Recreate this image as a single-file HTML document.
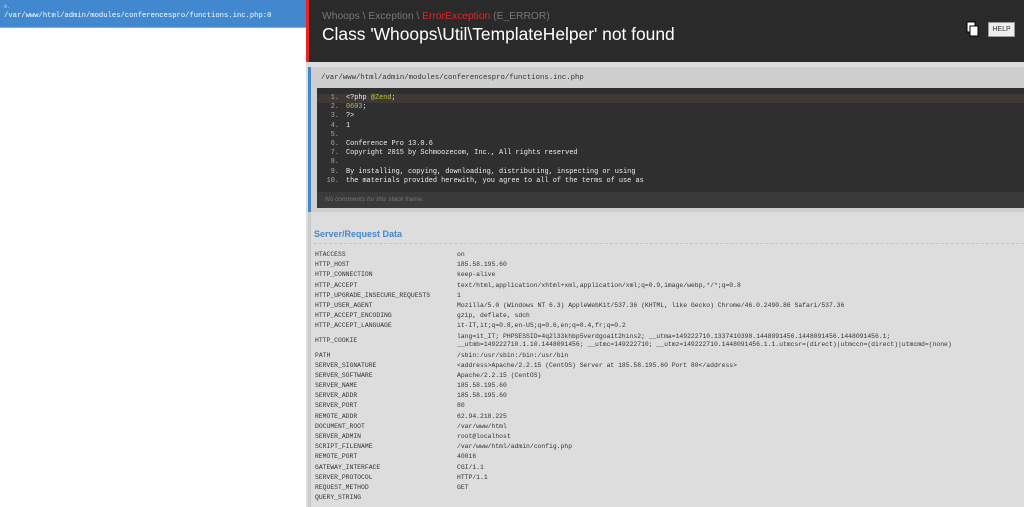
<!DOCTYPE html>
<html><head><meta charset="utf-8"><style>
*{margin:0;padding:0;box-sizing:border-box}
body{width:1024px;height:507px;overflow:hidden;background:#ddd;font-family:"Liberation Sans",sans-serif;position:relative}
.left{position:absolute;left:0;top:0;width:306px;height:507px;background:#fff}
.lh{position:absolute;left:0;top:0;width:306px;height:28px;background:#4288ce;border-bottom:1px solid #7fb0e0;color:#fff;font-family:"Liberation Mono",monospace}
.hdr{position:absolute;left:306px;top:0;width:718px;height:62px;background:#2a2a2a;border-left:3px solid #e22}
.mono{font-family:"Liberation Mono",monospace}
.frame{position:absolute;left:308px;top:67px;width:716px;height:145px;background:#cfcfcf;border-left:3px solid #4288ce}
.code{position:absolute;left:6px;top:21px;width:710px;height:120px;background:#2f2f2f;color:#eee;font-size:6.9px;line-height:9.2px;padding-top:6px}
.ln{display:inline-block;width:22px;text-align:right;color:#aaa;margin-right:7px}
.row{height:10.2px;font-size:6.4px;line-height:10.2px;color:#333;position:relative;white-space:nowrap}
.row .k{position:absolute;left:315px}
.row .v{position:absolute;left:457px}
</style></head><body>
<div class="left"><div class="lh"><div style="font-size:5px;color:#cde;position:absolute;left:4px;top:4px">0.</div><div style="font-size:7.2px;position:absolute;left:4px;top:12px">/var/www/html/admin/modules/conferencespro/functions.inc.php:0</div></div></div>
<div class="hdr">
<div style="position:absolute;left:13px;top:11px;font-size:10.3px;color:#777">Whoops \ Exception \ <span style="color:#e22">ErrorException</span> (E_ERROR)</div>
<div style="position:absolute;left:13px;top:24px;font-size:17.4px;color:#fff">Class 'Whoops\Util\TemplateHelper' not found</div>
<svg style="position:absolute;left:657px;top:21px" width="14" height="16"><rect x="1" y="1" width="8" height="10" fill="#fff" stroke="#000"/><rect x="4" y="5" width="8" height="10" fill="#fff" stroke="#000"/></svg>
<div style="position:absolute;left:679px;top:22px;width:27px;height:15px;background:#eee;border:1px solid #999;font-size:7px;line-height:13px;text-align:center;color:#333">HELP</div>
</div>
<div class="frame">
<div class="mono" style="position:absolute;left:10px;top:7px;font-size:7.3px;color:#333">/var/www/html/admin/modules/conferencespro/functions.inc.php</div>
<div class="code mono">
<div style="background:#423737"><span class="ln">1.</span>&lt;?php <span style="color:#a6c93a">@Zend</span>;</div>
<div><span class="ln">2.</span><span style="color:#a6c93a">0603</span>;</div>
<div><span class="ln">3.</span>?&gt;</div>
<div><span class="ln">4.</span>1</div>
<div><span class="ln">5.</span></div>
<div><span class="ln">6.</span>Conference Pro 13.0.6</div>
<div><span class="ln">7.</span>Copyright 2015 by Schmoozecom, Inc., All rights reserved</div>
<div><span class="ln">8.</span></div>
<div><span class="ln">9.</span>By installing, copying, downloading, distributing, inspecting or using</div>
<div><span class="ln">10.</span>the materials provided herewith, you agree to all of the terms of use as</div>
<div style="position:absolute;left:0;top:104px;width:710px;height:16px;background:#3a3a3a;color:#777;font-family:'Liberation Sans',sans-serif;font-style:italic;font-size:6.5px;line-height:16px;padding-left:8px">No comments for this stack frame.</div>
</div>
</div>
<div style="position:absolute;left:308px;top:212px;width:716px;height:295px;background:#ddd;border-left:3px solid #ccc"></div>
<div style="position:absolute;left:314px;top:229px;font-size:9px;font-weight:bold;color:#4288ce">Server/Request Data</div>
<div style="position:absolute;left:314px;top:243px;width:710px;border-top:1px dashed #c4c4c4"></div>
<div class="mono" style="position:absolute;left:0;top:250px;width:1024px">
<div class="row"><span class="k">HTACCESS</span><span class="v">on</span></div>
<div class="row"><span class="k">HTTP_HOST</span><span class="v">185.58.195.60</span></div>
<div class="row"><span class="k">HTTP_CONNECTION</span><span class="v">keep-alive</span></div>
<div class="row"><span class="k">HTTP_ACCEPT</span><span class="v">text/html,application/xhtml+xml,application/xml;q=0.9,image/webp,*/*;q=0.8</span></div>
<div class="row"><span class="k">HTTP_UPGRADE_INSECURE_REQUESTS</span><span class="v">1</span></div>
<div class="row"><span class="k">HTTP_USER_AGENT</span><span class="v">Mozilla/5.0 (Windows NT 6.3) AppleWebKit/537.36 (KHTML, like Gecko) Chrome/46.0.2490.86 Safari/537.36</span></div>
<div class="row"><span class="k">HTTP_ACCEPT_ENCODING</span><span class="v">gzip, deflate, sdch</span></div>
<div class="row"><span class="k">HTTP_ACCEPT_LANGUAGE</span><span class="v">it-IT,it;q=0.8,en-US;q=0.6,en;q=0.4,fr;q=0.2</span></div>
<div class="row" style="height:19px"><span class="k" style="top:4px">HTTP_COOKIE</span><span class="v" style="line-height:8.5px;top:1px">lang=it_IT; PHPSESSID=4q2l33khbp5verdgoa1t2hins2; __utma=149222710.1337410398.1448091456.1448091456.1448091456.1;<br>__utmb=149222710.1.10.1448091456; __utmc=149222710; __utmz=149222710.1448091456.1.1.utmcsr=(direct)|utmccn=(direct)|utmcmd=(none)</span></div>
<div class="row"><span class="k">PATH</span><span class="v">/sbin:/usr/sbin:/bin:/usr/bin</span></div>
<div class="row"><span class="k">SERVER_SIGNATURE</span><span class="v">&lt;address&gt;Apache/2.2.15 (CentOS) Server at 185.58.195.60 Port 80&lt;/address&gt;</span></div>
<div class="row"><span class="k">SERVER_SOFTWARE</span><span class="v">Apache/2.2.15 (CentOS)</span></div>
<div class="row"><span class="k">SERVER_NAME</span><span class="v">185.58.195.60</span></div>
<div class="row"><span class="k">SERVER_ADDR</span><span class="v">185.58.195.60</span></div>
<div class="row"><span class="k">SERVER_PORT</span><span class="v">80</span></div>
<div class="row"><span class="k">REMOTE_ADDR</span><span class="v">62.94.218.225</span></div>
<div class="row"><span class="k">DOCUMENT_ROOT</span><span class="v">/var/www/html</span></div>
<div class="row"><span class="k">SERVER_ADMIN</span><span class="v">root@localhost</span></div>
<div class="row"><span class="k">SCRIPT_FILENAME</span><span class="v">/var/www/html/admin/config.php</span></div>
<div class="row"><span class="k">REMOTE_PORT</span><span class="v">40016</span></div>
<div class="row"><span class="k">GATEWAY_INTERFACE</span><span class="v">CGI/1.1</span></div>
<div class="row"><span class="k">SERVER_PROTOCOL</span><span class="v">HTTP/1.1</span></div>
<div class="row"><span class="k">REQUEST_METHOD</span><span class="v">GET</span></div>
<div class="row"><span class="k">QUERY_STRING</span><span class="v"></span></div>
</div>
</body></html>
